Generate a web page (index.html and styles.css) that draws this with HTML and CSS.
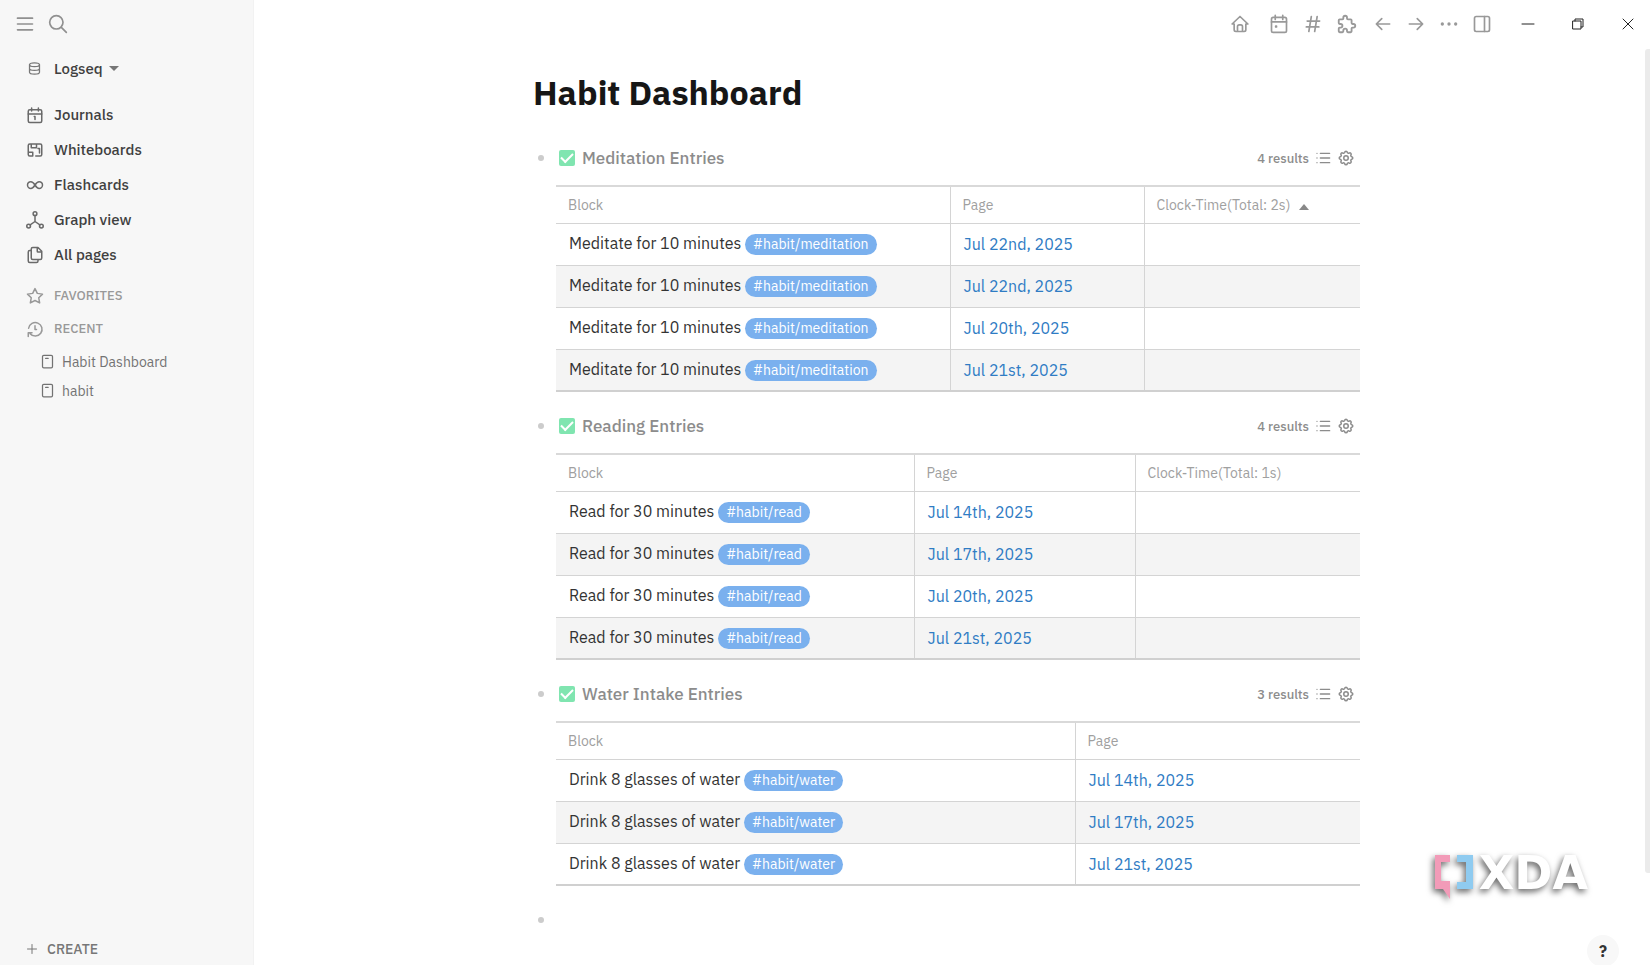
FILE: index.html
```
<!DOCTYPE html>
<html lang="en">
<head>
    <meta charset="UTF-8">
    <meta name="viewport" content="width=device-width, initial-scale=1.0">
    <title>Habit Dashboard - Logseq</title>
    <link rel="stylesheet" href="styles.css">
</head>
<body>

    <!-- Shared icons -->
    <svg class="sprite" aria-hidden="true">
        <symbol id="i-page" viewBox="0 0 24 24"><rect x="4" y="2" width="16" height="20" rx="2"/><path d="M9 7h4"/></symbol>
        <symbol id="i-list" viewBox="0 0 24 24"><path d="M8 5h14M8 12h14M8 19h14M3 5v.01M3 12v.01M3 19v.01"/></symbol>
        <symbol id="i-gear" viewBox="0 0 24 24"><path d="M10.3 4.3c.4-1.8 3-1.8 3.4 0a1.7 1.7 0 0 0 2.6 1.1c1.5-1 3.3.8 2.4 2.3a1.7 1.7 0 0 0 1 2.6c1.800.4 1.800 3 0 3.400a1.7 1.7 0 0 0-1 2.6c.9 1.5-.9 3.3-2.400 2.400a1.7 1.7 0 0 0-2.6 1c-.4 1.8-3 1.8-3.4 0a1.7 1.7 0 0 0-2.6-1c-1.5.9-3.3-.9-2.3-2.4a1.7 1.7 0 0 0-1.1-2.6c-1.8-.4-1.8-3 0-3.4a1.7 1.7 0 0 0 1.1-2.6c-1-1.5.8-3.3 2.3-2.3 1 .6 2.3 0 2.6-1.1z"/><circle cx="12" cy="12" r="3"/></symbol>
    </svg>

    <!-- Left sidebar -->
    <aside class="sidebar">
        <div class="sidebar-top">
            <button type="button" class="icon-btn" aria-label="Toggle sidebar">
                <svg class="icon icon-lg" viewBox="0 0 24 24"><path d="M3 5h18M3 12h18M3 19h18"/></svg>
            </button>
            <button type="button" class="icon-btn" aria-label="Search">
                <svg class="icon icon-lg" viewBox="0 0 24 24"><circle cx="10" cy="10" r="8"/><path d="M22 22l-6-6"/></svg>
            </button>
        </div>

        <button type="button" class="graph-select">
            <svg class="icon icon-sm" viewBox="0 0 24 24"><ellipse cx="12" cy="6" rx="8" ry="3"/><path d="M4 6v6c0 1.700 3.600 3 8 3s8-1.300 8-3V6M4 12v6c0 1.700 3.600 3 8 3s8-1.300 8-3v-6"/></svg>
            Logseq
            <span class="caret-down"></span>
        </button>

        <nav class="nav">
            <a href="#">
                <svg class="icon" viewBox="0 0 24 24"><rect x="3" y="5" width="18" height="17" rx="2"/><path d="M7.500 2.500v4M16.500 2.500v4M3 10.500h18M11 14h1v4"/></svg>
                Journals
            </a>
            <a href="#">
                <svg class="icon" viewBox="0 0 24 24"><path d="M9 20H5a2 2 0 0 1-2-2v-3h6zM3 11V6a2 2 0 0 1 2-2h14a2 2 0 0 1 2 2v12a2 2 0 0 1-2 2h-6M7 4v5h7V4M3 11v4M16 10h2v6"/></svg>
                Whiteboards
            </a>
            <a href="#">
                <svg class="icon" viewBox="0 0 24 24"><path d="M12 12c-1.500-2.500-3.300-4.500-5.500-4.500a4.500 4.500 0 0 0 0 9c2.200 0 4-2 5.500-4.500s3.300-4.500 5.500-4.500a4.500 4.500 0 0 1 0 9c-2.200 0-4-2-5.500-4.500z"/></svg>
                Flashcards
            </a>
            <a href="#">
                <svg class="icon" viewBox="0 0 24 24"><circle cx="12" cy="3.500" r="2.500"/><circle cx="3.500" cy="20" r="2.500"/><circle cx="20.500" cy="20" r="2.500"/><path d="M12 6v8M5.500 18.500L12 14l6.500 4.500"/></svg>
                Graph view
            </a>
            <a href="#">
                <svg class="icon" viewBox="0 0 24 24"><path d="M15 2v5a1 1 0 0 0 1 1h5M18 18H9a2 2 0 0 1-2-2V4a2 2 0 0 1 2-2h7l5 5v9a2 2 0 0 1-2 2zM7 6H5a2 2 0 0 0-2 2v12a2 2 0 0 0 2 2h9a2 2 0 0 0 2-2v-2"/></svg>
                All pages
            </a>
        </nav>

        <div class="nav-section">
            <svg class="icon" viewBox="0 0 24 24"><path d="M12 18l-6.200 3.200 1.200-6.800-5-4.900 6.900-1L12 2.200l3.100 6.300 6.900 1-5 4.900 1.200 6.800z"/></svg>
            FAVORITES
        </div>
        <div class="nav-section">
            <svg class="icon" viewBox="0 0 24 24"><path d="M12 7.500v5h2M3.500 11a9 9 0 1 1 2 7.200M8 17H3v5"/></svg>
            RECENT
        </div>
        <div class="recent">
            <a href="#"><svg class="icon icon-sm"><use href="#i-page"/></svg>Habit Dashboard</a>
            <a href="#"><svg class="icon icon-sm"><use href="#i-page"/></svg>habit</a>
        </div>

        <button type="button" class="create">
            <svg class="icon icon-xs" viewBox="0 0 24 24"><path d="M12 3v18M3 12h18"/></svg>
            CREATE
        </button>
    </aside>

    <div class="main">
        <!-- Top bar -->
        <header class="toolbar">
            <button type="button" class="tool home" aria-label="Home">
                <svg class="icon icon-lg" viewBox="0 0 24 24"><path d="M5 12H2.500L12 3l9.500 9H19M5 12v7a2 2 0 0 0 2 2h10a2 2 0 0 0 2-2v-7M9 21v-6a2 2 0 0 1 2-2h2a2 2 0 0 1 2 2v6"/></svg>
            </button>
            <button type="button" class="tool" aria-label="Journals">
                <svg class="icon icon-lg" viewBox="0 0 24 24"><rect x="3" y="4" width="18" height="18" rx="2"/><path d="M7.500 1.500v5M16.500 1.500v5M3 9.500h18M8 14.500h1v1H8z"/></svg>
            </button>
            <button type="button" class="tool" aria-label="Tags">
                <svg class="icon icon-lg" viewBox="0 0 24 24"><path d="M5 8.500h15M4 15.500h15M10 3L7 21M17 3l-3 18"/></svg>
            </button>
            <button type="button" class="tool" aria-label="Plugins">
                <svg class="icon icon-lg icon-puzzle" viewBox="0 0 24 24"><path d="M4 7h3a1 1 0 0 0 1-1V5a2 2 0 0 1 4 0v1a1 1 0 0 0 1 1h3a1 1 0 0 1 1 1v3a1 1 0 0 0 1 1h1a2 2 0 0 1 0 4h-1a1 1 0 0 0-1 1v3a1 1 0 0 1-1 1h-3a1 1 0 0 1-1-1v-1a2 2 0 0 0-4 0v1a1 1 0 0 1-1 1H4a1 1 0 0 1-1-1v-3a1 1 0 0 1 1-1h1a2 2 0 0 0 0-4H4a1 1 0 0 1-1-1V8a1 1 0 0 1 1-1z"/></svg>
            </button>
            <div class="history">
                <button type="button" aria-label="Back">
                    <svg class="icon icon-lg" viewBox="0 0 24 24"><path d="M20 12H4M10.500 5.500L4 12l6.500 6.500"/></svg>
                </button>
                <button type="button" aria-label="Forward">
                    <svg class="icon icon-lg" viewBox="0 0 24 24"><path d="M4 12h16M13.500 5.500L20 12l-6.500 6.500"/></svg>
                </button>
                <button type="button" aria-label="More">
                    <svg class="icon icon-lg dots" viewBox="0 0 24 24"><circle cx="4" cy="12" r="1"/><circle cx="12" cy="12" r="1"/><circle cx="20" cy="12" r="1"/></svg>
                </button>
                <button type="button" aria-label="Toggle right sidebar">
                    <svg class="icon icon-lg" viewBox="0 0 24 24"><rect x="3" y="3" width="18" height="18" rx="2"/><path d="M15 3v18"/></svg>
                </button>
            </div>
            <div class="window-controls">
                <button type="button" aria-label="Minimize"><svg class="icon" viewBox="0 0 18 18"><path d="M3 9h12"/></svg></button>
                <button type="button" aria-label="Restore"><svg class="icon" viewBox="0 0 18 18"><path d="M4 6h8v8H4zM6 6V4h8v8h-2"/></svg></button>
                <button type="button" aria-label="Close"><svg class="icon" viewBox="0 0 18 18"><path d="M4 4l10 10M14 4L4 14"/></svg></button>
            </div>
        </header>

        <main class="page">
            <h1>Habit Dashboard</h1>

            <!-- Meditation -->
            <section class="block">
                <div class="block-head">
                    <span class="bullet"></span>
                    <input type="checkbox" id="meditation" checked>
                    <label for="meditation">Meditation Entries</label>
                    <span class="results">4 results</span>
                    <button type="button" aria-label="List view"><svg class="icon icon-md"><use href="#i-list"/></svg></button>
                    <button type="button" aria-label="Settings"><svg class="icon"><use href="#i-gear"/></svg></button>
                </div>
                <table class="meditation">
                    <thead>
                        <tr><th class="col-block">Block</th><th class="col-page">Page</th><th>Clock-Time(Total: 2s)<span class="caret-up"></span></th></tr>
                    </thead>
                    <tbody>
                        <tr><td>Meditate for 10 minutes <a href="#" class="tag">#habit/meditation</a></td><td><a href="#">Jul 22nd, 2025</a></td><td></td></tr>
                        <tr><td>Meditate for 10 minutes <a href="#" class="tag">#habit/meditation</a></td><td><a href="#">Jul 22nd, 2025</a></td><td></td></tr>
                        <tr><td>Meditate for 10 minutes <a href="#" class="tag">#habit/meditation</a></td><td><a href="#">Jul 20th, 2025</a></td><td></td></tr>
                        <tr><td>Meditate for 10 minutes <a href="#" class="tag">#habit/meditation</a></td><td><a href="#">Jul 21st, 2025</a></td><td></td></tr>
                    </tbody>
                </table>
            </section>

            <!-- Reading -->
            <section class="block">
                <div class="block-head">
                    <span class="bullet"></span>
                    <input type="checkbox" id="reading" checked>
                    <label for="reading">Reading Entries</label>
                    <span class="results">4 results</span>
                    <button type="button" aria-label="List view"><svg class="icon icon-md"><use href="#i-list"/></svg></button>
                    <button type="button" aria-label="Settings"><svg class="icon"><use href="#i-gear"/></svg></button>
                </div>
                <table class="reading">
                    <thead>
                        <tr><th class="col-block">Block</th><th class="col-page">Page</th><th>Clock-Time(Total: 1s)</th></tr>
                    </thead>
                    <tbody>
                        <tr><td>Read for 30 minutes <a href="#" class="tag">#habit/read</a></td><td><a href="#">Jul 14th, 2025</a></td><td></td></tr>
                        <tr><td>Read for 30 minutes <a href="#" class="tag">#habit/read</a></td><td><a href="#">Jul 17th, 2025</a></td><td></td></tr>
                        <tr><td>Read for 30 minutes <a href="#" class="tag">#habit/read</a></td><td><a href="#">Jul 20th, 2025</a></td><td></td></tr>
                        <tr><td>Read for 30 minutes <a href="#" class="tag">#habit/read</a></td><td><a href="#">Jul 21st, 2025</a></td><td></td></tr>
                    </tbody>
                </table>
            </section>

            <!-- Water -->
            <section class="block">
                <div class="block-head">
                    <span class="bullet"></span>
                    <input type="checkbox" id="water" checked>
                    <label for="water">Water Intake Entries</label>
                    <span class="results">3 results</span>
                    <button type="button" aria-label="List view"><svg class="icon icon-md"><use href="#i-list"/></svg></button>
                    <button type="button" aria-label="Settings"><svg class="icon"><use href="#i-gear"/></svg></button>
                </div>
                <table class="water">
                    <thead>
                        <tr><th class="col-block">Block</th><th>Page</th></tr>
                    </thead>
                    <tbody>
                        <tr><td>Drink 8 glasses of water <a href="#" class="tag">#habit/water</a></td><td><a href="#">Jul 14th, 2025</a></td></tr>
                        <tr><td>Drink 8 glasses of water <a href="#" class="tag">#habit/water</a></td><td><a href="#">Jul 17th, 2025</a></td></tr>
                        <tr><td>Drink 8 glasses of water <a href="#" class="tag">#habit/water</a></td><td><a href="#">Jul 21st, 2025</a></td></tr>
                    </tbody>
                </table>
            </section>

            <div class="block-head"><span class="bullet"></span></div>
        </main>
    </div>

    <div class="scrollbar"></div>

    <div class="watermark">
        <svg width="38" height="46" viewBox="0 0 38 46"><path fill="#f29bb8" d="M0 0h15v7H6v19h9v18L8 34H0z"/><path fill="#8fcbf0" d="M22 0h16v34H22v-7h9V7h-9z"/></svg>
        <span>XDA</span>
    </div>

    <button type="button" class="help">?</button>

</body>
</html>
```
FILE: styles.css
```
* {
    box-sizing: border-box;
}

body {
    margin: 0;
    min-height: 100vh;
    display: flex;
    background: #fff;
    color: #333;
    font-family: "IBM Plex Sans", Inter, "Noto Sans", sans-serif;
    font-size: 16px;
}

a {
    color: #2f7cc4;
    text-decoration: none;
}

button {
    padding: 0;
    border: 0;
    background: none;
    color: inherit;
    font: inherit;
    display: flex;
    align-items: center;
    justify-content: center;
}

/* Icons */
.sprite {
    display: none;
}

.icon {
    width: 18px;
    height: 18px;
    flex: none;
    overflow: visible;
    fill: none;
    stroke: currentColor;
    stroke-width: 2;
    stroke-linecap: round;
    stroke-linejoin: round;
}

.icon-xs {
    width: 12px;
    height: 12px;
}

.icon-sm {
    width: 15px;
    height: 15px;
}

.icon-md {
    width: 16px;
    height: 16px;
}

.icon-lg {
    width: 20px;
    height: 20px;
}

.icon-puzzle {
    width: 22px;
    height: 22px;
}

.dots {
    fill: currentColor;
}

/* Sidebar */
.sidebar {
    width: 254px;
    flex: none;
    display: flex;
    flex-direction: column;
    background: #f7f7f7;
    border-right: 1px solid #f2f2f2;
    font-size: 15px;
}

.sidebar-top {
    height: 48px;
    padding-left: 8px;
    display: flex;
    align-items: center;
}

.icon-btn {
    width: 33px;
    height: 32px;
    color: #909090;
}

.graph-select {
    height: 41px;
    padding-left: 27px;
    gap: 12px;
    justify-content: flex-start;
    font-weight: 500;
    color: #404040;
}

.graph-select .icon {
    color: #777;
}

.caret-down {
    border: 5px solid transparent;
    border-top-color: #777;
    border-bottom: 0;
    margin-left: -6px;
}

.nav {
    margin-top: 8px;
    margin-bottom: 7px;
}

.nav a {
    height: 35px;
    padding-left: 26px;
    display: flex;
    align-items: center;
    gap: 10px;
    color: #404040;
    font-weight: 500;
}

.nav .icon {
    color: #6a6a6a;
}

.nav-section {
    height: 33px;
    padding-left: 26px;
    display: flex;
    align-items: center;
    gap: 10px;
    font-size: 13px;
    font-weight: 500;
    color: #999;
}

.recent {
    margin-top: 2px;
    font-size: 14px;
}

.recent a {
    height: 29px;
    padding-left: 40px;
    display: flex;
    align-items: center;
    gap: 7px;
    color: #737373;
}

.create {
    margin-top: auto;
    height: 32px;
    padding-left: 26px;
    gap: 9px;
    justify-content: flex-start;
    font-size: 14px;
    font-weight: 500;
    color: #777;
}

/* Main area */
.main {
    flex: 1;
    min-width: 0;
}

.toolbar {
    height: 48px;
    display: flex;
    align-items: center;
    justify-content: flex-end;
    color: #999;
}

.tool {
    width: 34px;
    height: 32px;
}

.home {
    margin-right: 5px;
}

.history {
    margin-left: 2px;
    display: flex;
}

.history button {
    width: 33px;
    height: 32px;
}

.window-controls {
    margin-left: 8px;
    display: flex;
    gap: 6px;
    color: #222;
}

.window-controls button {
    width: 44px;
    height: 32px;
}

.window-controls .icon {
    stroke-width: 1;
}

.page {
    max-width: 838px;
    margin: 0 auto;
    padding-right: 11px;
}

h1 {
    margin: 18px 0 22px;
    font-size: 34px;
    line-height: 52px;
    font-weight: 700;
    color: #161616;
}

/* Query blocks */
.block {
    margin-bottom: 16px;
}

.block-head {
    height: 36px;
    padding: 0 5px;
    display: flex;
    align-items: center;
    color: #8c8c8c;
    font-size: 17px;
    font-weight: 500;
}

.block-head button {
    margin-left: 6px;
}

.bullet {
    width: 6px;
    height: 6px;
    margin-right: 15px;
    border-radius: 50%;
    background: #ccc;
}

input[type="checkbox"] {
    appearance: none;
    width: 16px;
    height: 16px;
    margin: 0 7px 0 0;
    border-radius: 2px;
    background: #80e5b0;
    display: grid;
    place-items: center;
}

input[type="checkbox"]::after {
    content: "";
    width: 10px;
    height: 5px;
    margin-bottom: 3px;
    border-left: 2px solid #fff;
    border-bottom: 2px solid #fff;
    transform: rotate(-45deg);
}

.results {
    margin-left: auto;
    font-size: 13px;
}

table {
    width: calc(100% - 23px);
    margin: 9px 0 0 23px;
    border-collapse: collapse;
    table-layout: fixed;
    border-top: 2px solid #d9d9d9;
    border-bottom: 2px solid #d0d0d0;
}

th {
    height: 37px;
    padding: 0 12px;
    text-align: left;
    font-size: 14px;
    font-weight: 400;
    color: #a0a0a0;
}

td {
    height: 42px;
    padding: 0 13px;
    border-top: 1px solid #d4d4d4;
}

th + th,
td + td {
    border-left: 1px solid #d4d4d4;
}

tbody tr:nth-child(even) {
    background: #f4f4f4;
}

.meditation .col-block {
    width: 394px;
}

.meditation .col-page {
    width: 194px;
}

.reading .col-block {
    width: 358px;
}

.reading .col-page {
    width: 221px;
}

.water .col-block {
    width: 519px;
}

.caret-up {
    display: inline-block;
    margin-left: 9px;
    border: 5px solid transparent;
    border-bottom: 6px solid #888;
    border-top: 0;
}

.tag {
    display: inline-block;
    padding: 0 8px;
    border-radius: 11px;
    background: #7ab0ee;
    color: #fff;
    font-size: 14px;
    line-height: 21px;
}

/* Things floating over the page */
.scrollbar {
    position: fixed;
    top: 49px;
    right: 0;
    bottom: 92px;
    width: 5px;
    background: #ebebeb;
    border-radius: 3px 0 0 3px;
}

.watermark {
    position: fixed;
    right: 62px;
    bottom: 64px;
    display: flex;
    align-items: flex-start;
    gap: 6px;
    filter: drop-shadow(-2px 3px 3px rgba(0, 0, 0, 0.6));
}

.watermark span {
    color: #fff;
    font-family: "DejaVu Sans", sans-serif;
    font-size: 46px;
    line-height: 36px;
    font-weight: 700;
}

.help {
    position: fixed;
    right: 31px;
    bottom: -2px;
    width: 32px;
    height: 32px;
    border-radius: 50%;
    background: #f8f8f8;
    color: #333;
    font-weight: 700;
}
```
